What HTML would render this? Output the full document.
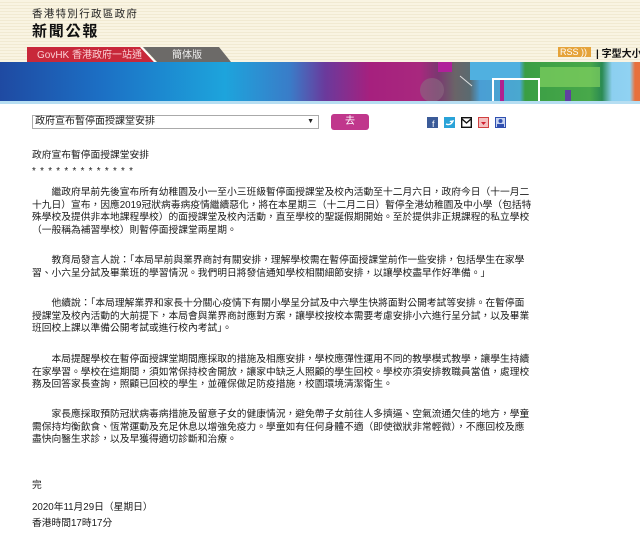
<!DOCTYPE html>
<html><head><meta charset="utf-8">
<style>
*{margin:0;padding:0;box-sizing:border-box}
body{width:640px;height:535px;overflow:hidden;background:#fff;font-family:"Liberation Sans","Noto Sans CJK TC",sans-serif;color:#222;position:relative}
.hdr{position:absolute;left:0;top:0;width:640px;height:62px;background:repeating-linear-gradient(180deg,#f9f4e2 0,#f9f4e2 2px,#f1ead2 2px,#f1ead2 3px)}
.t1{position:absolute;left:32px;top:6px;font-size:10.5px;letter-spacing:1.3px;color:#222;white-space:nowrap}
.t2{position:absolute;left:32px;top:20px;font-size:15px;font-weight:bold;letter-spacing:1.8px;color:#111;white-space:nowrap}
.tabs{position:absolute;left:0;top:47px}
.rss{position:absolute;left:558px;top:47px;width:33px;height:10px;background:#e5a33a;color:#fff;font-size:9px;line-height:10px;padding-left:2px}
.fs{position:absolute;left:596px;top:45px;font-size:10px;font-weight:bold;white-space:nowrap;color:#111}
.banner{position:absolute;left:0;top:62px;width:640px;height:39px;background:linear-gradient(90deg,#1f4aa2 0,#1c6fc4 100px,#1da4dc 225px,#3a7cc8 290px,#6a3a9c 325px,#a6207e 370px,#a8287e 420px,#7a3870 438px,#6a6468 455px,#5a6a70 470px,#4a9ed4 480px,#4aa8d0 520px,#3a9e44 525px,#48a84a 590px,#2a8a52 602px,#8ccff0 612px,#90d2f2 630px,#e8703c 635px)}
.blue{position:absolute;left:0;top:101px;width:640px;height:3px;background:#b6def2}
.sel{position:absolute;left:32px;top:115px;width:287px;height:14px;border:1px solid #aaa;font-size:10px;line-height:12px;padding-left:2px;color:#222;background:#fff}
.sel span{position:absolute;right:4px;top:0;font-size:7px}
.go{position:absolute;left:331px;top:114px;width:38px;height:16px;background:#c0378c;border-radius:3px;color:#fff;font-size:10px;line-height:16px;text-align:center}
.ic{position:absolute;top:117px;width:11px;height:11px}
.txt{position:absolute;left:32px;width:500px;font-size:9.75px;line-height:12.6px;color:#1a1a1a}
.ind{text-indent:19.5px}
</style></head><body>
<div class="hdr"></div>
<div class="t1">香港特別行政區政府</div>
<div class="t2">新聞公報</div>
<svg class="tabs" width="240" height="15" viewBox="0 0 240 15">
<polygon points="27,0 140,0 154,15 27,15" fill="#c8283a"/>
<polygon points="143,0 219,0 231,15 157,15" fill="#6c6a68"/>
<line x1="141" y1="0" x2="155" y2="15" stroke="#fff" stroke-width="1.5"/>
<text x="37" y="11" font-size="10" fill="#fbd0d4" font-family="Liberation Sans,Noto Sans CJK TC,sans-serif">GovHK 香港政府一站通</text>
<text x="172" y="11" font-size="10" fill="#eee" font-family="Liberation Sans,Noto Sans CJK TC,sans-serif">簡体版</text>
</svg>
<div class="rss">RSS ))</div>
<div class="fs">| 字型大小</div>
<div class="banner"></div>
<svg style="position:absolute;left:0;top:62px" width="640" height="39">
<rect x="438" y="0" width="14" height="10" fill="#b0209a"/>
<circle cx="432" cy="28" r="12" fill="#8a6a80" opacity=".6"/>
<rect x="470" y="0" width="50" height="18" fill="#50b0e0"/>
<rect x="540" y="5" width="60" height="20" fill="#80d060" opacity=".7"/>
<rect x="493" y="17" width="46" height="24" fill="none" stroke="#fff" stroke-width="2"/>
<rect x="500" y="18" width="4" height="21" fill="#b02090"/>
<rect x="565" y="28" width="6" height="11" fill="#6040a0"/>
<line x1="460" y1="14" x2="472" y2="24" stroke="#fff" stroke-width="1" opacity=".8"/>
</svg>
<div class="blue"></div>
<div class="sel">政府宣布暫停面授課堂安排<span>▼</span></div>
<div class="go">去</div>
<svg class="ic" style="left:427px" viewBox="0 0 11 11"><rect width="11" height="11" fill="#3b5b98"/><text x="5" y="10" font-size="9" fill="#fff" font-family="Liberation Sans">f</text></svg>
<svg class="ic" style="left:444px" viewBox="0 0 11 11"><rect width="11" height="11" fill="#2aa3d8"/><path d="M2 7c2 1 5 1 7-3-1 0-2 1-3 0" fill="none" stroke="#fff" stroke-width="1.4"/></svg>
<svg class="ic" style="left:461px" viewBox="0 0 11 11"><rect x="0.7" y="0.7" width="9.6" height="9.6" fill="#fff" stroke="#111" stroke-width="1.4"/><path d="M1 2l4.5 4L10 2" fill="none" stroke="#111" stroke-width="1.4"/></svg>
<svg class="ic" style="left:478px" viewBox="0 0 11 11"><rect x="0.5" y="0.5" width="10" height="10" fill="#f4c0c0" stroke="#d04040"/><path d="M3 5h5l-2.5 3z" fill="#d02030"/></svg>
<svg class="ic" style="left:495px" viewBox="0 0 11 11"><rect x="0.5" y="0.5" width="10" height="10" fill="#c8d4f0" stroke="#3050b0"/><circle cx="5.5" cy="4" r="2" fill="#3050b0"/><rect x="2" y="7" width="7" height="3" fill="#3050b0"/></svg>

<div class="txt" style="top:150px">政府宣布暫停面授課堂安排</div>
<div class="txt" style="top:166px;letter-spacing:4.3px">*************</div>
<div class="txt ind" style="top:187px">繼政府早前先後宣布所有幼稚園及小一至小三班級暫停面授課堂及校內活動至十二月六日，政府今日（十一月二十九日）宣布，因應2019冠狀病毒病疫情繼續惡化，將在本星期三（十二月二日）暫停全港幼稚園及中小學（包括特殊學校及提供非本地課程學校）的面授課堂及校內活動，直至學校的聖誕假期開始。至於提供非正規課程的私立學校（一般稱為補習學校）則暫停面授課堂兩星期。</div>
<div class="txt ind" style="top:255px">教育局發言人說：「本局早前與業界商討有關安排，理解學校需在暫停面授課堂前作一些安排，包括學生在家學習、小六呈分試及畢業班的學習情況。我們明日將發信通知學校相關細節安排，以讓學校盡早作好準備。」</div>
<div class="txt ind" style="top:298px">他續說：「本局理解業界和家長十分關心疫情下有關小學呈分試及中六學生快將面對公開考試等安排。在暫停面授課堂及校內活動的大前提下，本局會與業界商討應對方案，讓學校按校本需要考慮安排小六進行呈分試，以及畢業班回校上課以準備公開考試或進行校內考試」。</div>
<div class="txt ind" style="top:354px">本局提醒學校在暫停面授課堂期間應採取的措施及相應安排，學校應彈性運用不同的教學模式教學，讓學生持續在家學習。學校在這期間，須如常保持校舍開放，讓家中缺乏人照顧的學生回校。學校亦須安排教職員當值，處理校務及回答家長查詢，照顧已回校的學生，並確保做足防疫措施，校園環境清潔衞生。</div>
<div class="txt ind" style="top:409px">家長應採取預防冠狀病毒病措施及留意子女的健康情況，避免帶子女前往人多擠逼、空氣流通欠佳的地方，學童需保持均衡飲食、恆常運動及充足休息以增強免疫力。學童如有任何身體不適（即使徵狀非常輕微），不應回校及應盡快向醫生求診，以及早獲得適切診斷和治療。</div>
<div class="txt" style="top:480px">完</div>
<div class="txt" style="top:502px">2020年11月29日（星期日）</div>
<div class="txt" style="top:518px">香港時間17時17分</div>
</body></html>
